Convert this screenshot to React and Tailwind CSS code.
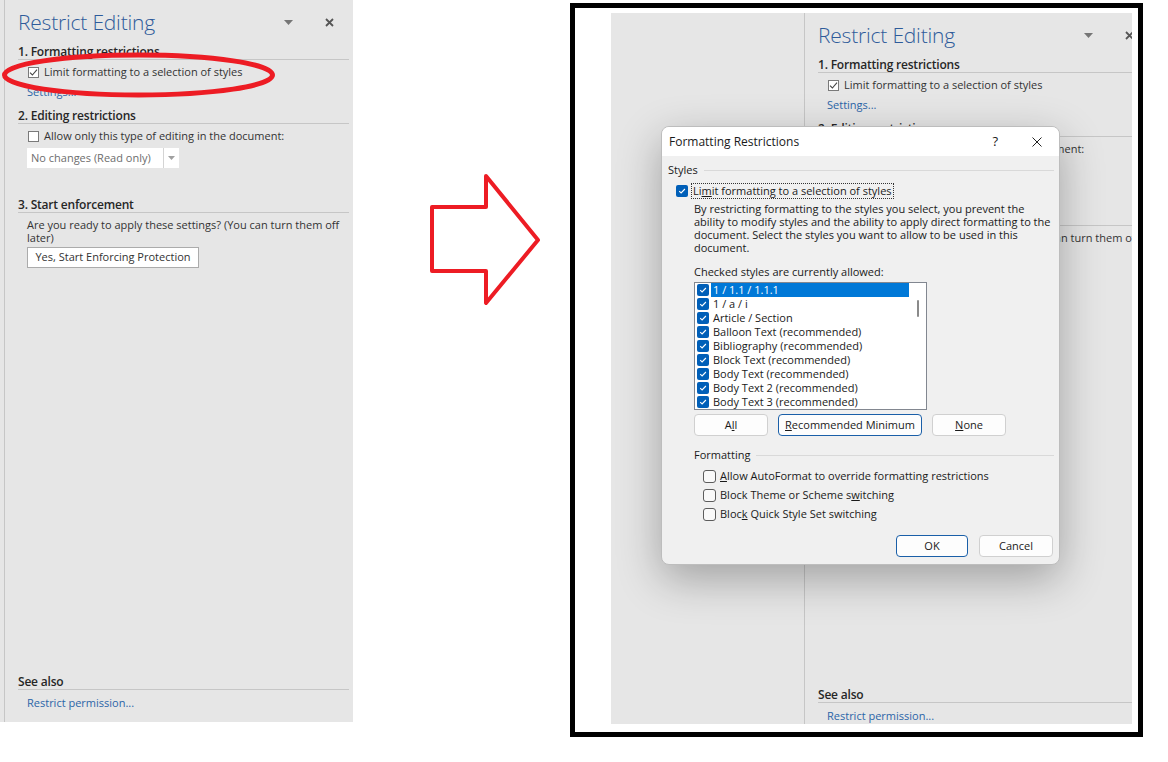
import React from "react";

function OfficeCheck({ checked }) {
  return (
    <span className="w-[11px] h-[11px] border border-[#7a7a7a] bg-white flex items-center justify-center shrink-0">
      {checked && (
        <svg width="9" height="9" viewBox="0 0 9 9">
          <path d="M1 4.6 L3.4 7 L8 1.6" fill="none" stroke="#444" strokeWidth="1.1" />
        </svg>
      )}
    </span>
  );
}

function WinCheck() {
  return (
    <span className="w-[12px] h-[12px] rounded-[2px] bg-[#005fb8] flex items-center justify-center shrink-0">
      <svg width="10" height="10" viewBox="0 0 10 10">
        <path d="M2.2 5.2 L4.1 7 L7.9 3" fill="none" stroke="#ffffff" strokeWidth="1.1" />
      </svg>
    </span>
  );
}

function WinEmpty() {
  return <span className="w-[13px] h-[13px] rounded-[3px] border border-[#5c5c5c] bg-[#f9f9f9] shrink-0" />;
}

function Heading({ children, className = "" }) {
  return (
    <div className={"h-[16px] border-b border-[#c6c6c6] font-semibold text-[12px] leading-[15px] text-[#262626] tracking-[-0.2px] whitespace-nowrap " + className}>
      {children}
    </div>
  );
}

function Panel() {
  return (
    <div className="w-[349px] h-[722px] shrink-0 border-l border-[#c6c6c6] bg-[#e6e6e6] flex flex-col pl-[13px] pr-[4px] text-[11px] text-[#333]">
      <div className="h-[44px] flex items-center justify-between pr-[15px]">
        <span className="text-[21px] font-light text-[#2e5b9a] leading-none tracking-[-0.2px] whitespace-nowrap">Restrict Editing</span>
        <div className="flex items-center gap-[32px]">
          <svg width="9" height="5" viewBox="0 0 9 5">
            <polygon points="0,0 9,0 4.5,5" fill="#767676" />
          </svg>
          <svg width="9" height="9" viewBox="0 0 9 9">
            <path d="M1 1 L8 8 M8 1 L1 8" stroke="#555" strokeWidth="1.8" />
          </svg>
        </div>
      </div>
      <Heading>1. Formatting restrictions</Heading>
      <div className="h-[24px] flex items-center pl-[10px] gap-[5px] whitespace-nowrap">
        <OfficeCheck checked />
        <span>Limit formatting to a selection of styles</span>
      </div>
      <div className="h-[16px] flex items-center pl-[9px] text-[#2b65a8] whitespace-nowrap">Settings...</div>
      <Heading className="mt-[8px]">2. Editing restrictions</Heading>
      <div className="h-[24px] flex items-center pl-[10px] gap-[5px] whitespace-nowrap">
        <OfficeCheck />
        <span>Allow only this type of editing in the document:</span>
      </div>
      <div className="ml-[9px] w-[152px] h-[20px] bg-white flex">
        <span className="w-[136px] pl-[4px] flex items-center text-[#6d6d6d] whitespace-nowrap">No changes (Read only)</span>
        <span className="flex-1 border-l border-[#d4d4d4] flex items-center justify-center">
          <svg width="7" height="4" viewBox="0 0 7 4">
            <polygon points="0,0 7,0 3.5,4" fill="#a0a0a0" />
          </svg>
        </span>
      </div>
      <Heading className="mt-[29px]">3. Start enforcement</Heading>
      <div className="pl-[9px] pt-[5px] leading-[13px] whitespace-nowrap">
        <div>Are you ready to apply these settings? (You can turn them off</div>
        <div>later)</div>
      </div>
      <div className="ml-[9px] mt-[3px] w-[172px] h-[21px] bg-white border border-[#ababab] flex items-center justify-center whitespace-nowrap">
        Yes, Start Enforcing Protection
      </div>
      <Heading className="mt-auto">See also</Heading>
      <div className="h-[26px] flex items-center pl-[9px] text-[#2b65a8] whitespace-nowrap">Restrict permission...</div>
      <div className="h-[6px]" />
    </div>
  );
}

const styles = [
  "1 / 1.1 / 1.1.1",
  "1 / a / i",
  "Article / Section",
  "Balloon Text (recommended)",
  "Bibliography (recommended)",
  "Block Text (recommended)",
  "Body Text (recommended)",
  "Body Text 2 (recommended)",
  "Body Text 3 (recommended)",
];

function Btn({ children, w, primary }) {
  return (
    <div
      className={
        "h-[22px] rounded-[4px] border bg-[#fdfdfd] flex items-center justify-center whitespace-nowrap " +
        (primary ? "border-[#1a5fa8]" : "border-[#d0d0d0]")
      }
      style={{ width: w }}
    >
      {children}
    </div>
  );
}

function Dialog() {
  return (
    <div className="absolute left-[50px] top-[113px] w-[399px] h-[439px] rounded-[8px] border border-[#bdbdbd] bg-[#f0f0f0] shadow-[0_14px_44px_rgba(0,0,0,0.3)] overflow-hidden flex flex-col text-[11px] text-[#1a1a1a]">
      <div className="h-[29px] bg-white flex items-center pl-[7px] pr-[17px]">
        <span className="text-[12px] whitespace-nowrap">Formatting Restrictions</span>
        <span className="flex-1" />
        <span className="text-[13px] mr-[34px]">?</span>
        <svg width="10" height="10" viewBox="0 0 10 10">
          <path d="M0.5 0.5 L9.5 9.5 M9.5 0.5 L0.5 9.5" stroke="#222" strokeWidth="1" />
        </svg>
      </div>
      <div className="flex-1 flex flex-col pl-[6px] pr-[5px]">
        <div className="mt-[7px] h-[14px] flex items-center">
          <span>Styles</span>
          <span className="flex-1 ml-[6px] border-t border-[#d9d9d9]" />
        </div>
        <div className="mt-[7px] h-[14px] flex items-center pl-[8px]">
          <WinCheck />
          <span className="ml-[3px] border border-dotted border-[#333] px-[1px] leading-[14px] whitespace-nowrap">
            Li<u>m</u>it formatting to a selection of styles
          </span>
        </div>
        <div className="pl-[26px]">
          <div className="mt-[4px] leading-[13px] whitespace-nowrap">
            <div>By restricting formatting to the styles you select, you prevent the</div>
            <div>ability to modify styles and the ability to apply direct formatting to the</div>
            <div>document. Select the styles you want to allow to be used in this</div>
            <div>document.</div>
          </div>
          <div className="mt-[11px] leading-[13px] whitespace-nowrap">Checked styles are currently allowed:</div>
          <div className="mt-[4px] w-[233px] h-[128px] border border-[#828790] bg-white flex">
            <div className="w-[214px] flex flex-col">
              {styles.map((s, i) => (
                <div key={s} className="h-[14px] flex items-center pl-[2px]">
                  <WinCheck />
                  <span
                    className={
                      "ml-[2px] w-[198px] h-full pl-[2px] flex items-center whitespace-nowrap " +
                      (i === 0 ? "bg-[#0078d7] text-white" : "")
                    }
                  >
                    {s}
                  </span>
                </div>
              ))}
            </div>
            <div className="flex-1 flex justify-center pt-[17px]">
              <span className="w-[2px] h-[17px] rounded-full bg-[#8a8a8a]" />
            </div>
          </div>
          <div className="mt-[4px] flex gap-[10px]">
            <Btn w={74}>
              A<u>l</u>l
            </Btn>
            <Btn w={144} primary>
              <u>R</u>ecommended Minimum
            </Btn>
            <Btn w={74}>
              <u>N</u>one
            </Btn>
          </div>
          <div className="mt-[12px] h-[14px] flex items-center">
            <span>Formatting</span>
            <span className="flex-1 ml-[6px] border-t border-[#d9d9d9]" />
          </div>
          <div className="mt-[5px] pl-[9px] flex flex-col">
            <div className="h-[19px] flex items-center gap-[4px] whitespace-nowrap">
              <WinEmpty />
              <span>
                <u>A</u>llow AutoFormat to override formatting restrictions
              </span>
            </div>
            <div className="h-[19px] flex items-center gap-[4px] whitespace-nowrap">
              <WinEmpty />
              <span>
                Block Theme or Scheme s<u>w</u>itching
              </span>
            </div>
            <div className="h-[19px] flex items-center gap-[4px] whitespace-nowrap">
              <WinEmpty />
              <span>
                Bloc<u>k</u> Quick Style Set switching
              </span>
            </div>
          </div>
        </div>
        <div className="mt-[11px] flex justify-end gap-[11px] pr-[1px]">
          <Btn w={72} primary>
            OK
          </Btn>
          <Btn w={74}>Cancel</Btn>
        </div>
      </div>
    </div>
  );
}

export default function App() {
  return (
    <div className="w-[1168px] h-[762px] bg-white flex items-start overflow-hidden font-['Open_Sans',sans-serif]">
      <div className="relative w-[353px] h-[722px] bg-[#e6e6e6] pl-[4px] flex shrink-0">
        <Panel />
        <svg className="absolute left-0 top-[50px]" width="280" height="56" viewBox="0 0 280 56">
          <ellipse cx="138.5" cy="25" rx="134" ry="20" fill="none" stroke="#ed1c24" strokeWidth="5" />
        </svg>
      </div>
      <div className="w-[217px] shrink-0 pl-[72px] pt-[170px]">
        <svg width="120" height="140" viewBox="0 0 120 140">
          <polygon
            points="7,37 61,37 61,6 113,70 61,133 61,101 7,101"
            fill="none"
            stroke="#ed1c24"
            strokeWidth="4"
            strokeLinejoin="round"
          />
        </svg>
      </div>
      <div className="mt-[3px] w-[573px] h-[734px] shrink-0 border-[5px] border-black bg-white pl-[36px] pt-[5px] pr-[6px] pb-[8px]">
        <div className="relative w-full h-full bg-[#e6e6e6] flex overflow-hidden">
          <div className="w-[193px] shrink-0" />
          <Panel />
          <Dialog />
        </div>
      </div>
    </div>
  );
}
